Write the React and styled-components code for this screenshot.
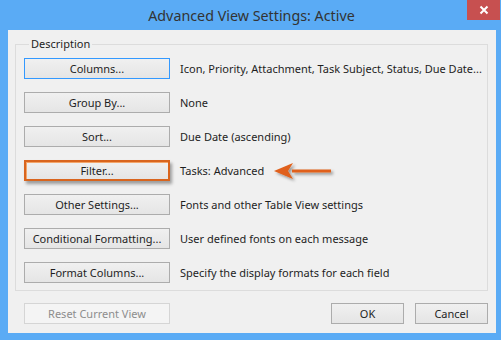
import React from "react";
import styled, { createGlobalStyle } from "styled-components";

const GlobalStyle = createGlobalStyle`
  html, body {
    margin: 0;
    padding: 0;
    background: #5aabf5;
  }
  body {
    font-family: "Noto Sans", "Open Sans", "DejaVu Sans", sans-serif;
    font-size: 11px;
    color: #1e1e1e;
  }
`;

const Window = styled.div`
  width: 501px;
  height: 340px;
  box-sizing: border-box;
  background: #5aabf5;
  display: flex;
  flex-direction: column;
  padding: 0 5px 8px 8px;
`;

const TitleBar = styled.div`
  height: 30px;
  flex-shrink: 0;
  position: relative;
  display: flex;
  align-items: center;
  justify-content: center;
  font-size: 14.3px;
  color: #333;
  padding-right: 1px;
`;

const CloseButton = styled.div`
  position: absolute;
  top: 0;
  right: -4px;
  width: 33px;
  height: 20px;
  background: #c75050;
  display: flex;
  align-items: center;
  justify-content: center;
`;

const Client = styled.div`
  flex: 1;
  background: #f0f0f0;
  display: flex;
  flex-direction: column;
  padding: 8px 8px 9px 7px;
`;

const GroupBox = styled.fieldset`
  margin: 0;
  border: 1px solid #dcdcdc;
  padding: 8px 0 7px 8px;
  display: flex;
  flex-direction: column;
  gap: 13px;
`;

const Legend = styled.legend`
  padding: 0 2px;
  margin-left: 5px;
  color: #1e1e1e;
  line-height: 12px;
`;

const Row = styled.div`
  display: flex;
  align-items: center;
  gap: 10px;
`;

const Button = styled.button`
  font-family: inherit;
  font-size: 11px;
  width: ${(p) => p.$width || 146}px;
  height: 21px;
  padding: 0;
  box-sizing: border-box;
  border: 1px solid ${(p) => (p.$focused ? "#3399ff" : p.$disabled ? "#d5d5d5" : "#acacac")};
  background: ${(p) =>
    p.$disabled ? "#f4f4f4" : "linear-gradient(#f0f0f0, #e5e5e5)"};
  color: ${(p) => (p.$disabled ? "#8d8d8d" : "#1e1e1e")};
  ${(p) =>
    p.$highlight &&
    `
    border: 2px solid #d9651e;
    box-shadow: 2px 3px 3px rgba(0,0,0,0.35), inset 1px 1px 0 #f3a56a;
  `}
`;

const Desc = styled.span`
  white-space: nowrap;
`;

const Arrow = styled.svg`
  overflow: visible;
`;

const Footer = styled.div`
  display: flex;
  align-items: center;
  margin-top: 12px;
  padding-left: 9px;
  gap: 11px;
`;

const Spacer = styled.div`
  flex: 1;
`;

const rows = [
  { label: "Columns...", desc: "Icon, Priority, Attachment, Task Subject, Status, Due Date...", focused: true },
  { label: "Group By...", desc: "None" },
  { label: "Sort...", desc: "Due Date (ascending)" },
  { label: "Filter...", desc: "Tasks: Advanced", highlight: true },
  { label: "Other Settings...", desc: "Fonts and other Table View settings" },
  { label: "Conditional Formatting...", desc: "User defined fonts on each message" },
  { label: "Format Columns...", desc: "Specify the display formats for each field" },
];

export default function App() {
  return (
    <>
      <GlobalStyle />
      <Window>
        <TitleBar>
          Advanced View Settings: Active
          <CloseButton>
            <svg width="10" height="10" viewBox="0 0 10 10">
              <path d="M1.5 1.5 L8.5 8.5 M8.5 1.5 L1.5 8.5" stroke="#fff" strokeWidth="2" />
            </svg>
          </CloseButton>
        </TitleBar>
        <Client>
          <GroupBox>
            <Legend>Description</Legend>
            {rows.map((r) => (
              <Row key={r.label}>
                <Button $focused={r.focused} $highlight={r.highlight}>
                  {r.label}
                </Button>
                <Desc>{r.desc}</Desc>
                {r.highlight && (
                  <Arrow width="58" height="18" viewBox="0 0 58 18">
                    <defs>
                      <filter id="sh" x="-20%" y="-50%" width="150%" height="200%">
                        <feDropShadow dx="2" dy="2" stdDeviation="1.5" floodColor="#000" floodOpacity="0.4" />
                      </filter>
                    </defs>
                    <g filter="url(#sh)">
                      <path d="M18 7.5 L57 7.5 L57 10.5 L18 10.5 Z" fill="#e0601a" />
                      <path d="M0 9 L19 1 L14 9 L19 17 Z" fill="#e0601a" />
                    </g>
                  </Arrow>
                )}
              </Row>
            ))}
          </GroupBox>
          <Footer>
            <Button $disabled>Reset Current View</Button>
            <Spacer />
            <Button $width={73}>OK</Button>
            <Button $width={73}>Cancel</Button>
          </Footer>
        </Client>
      </Window>
    </>
  );
}
